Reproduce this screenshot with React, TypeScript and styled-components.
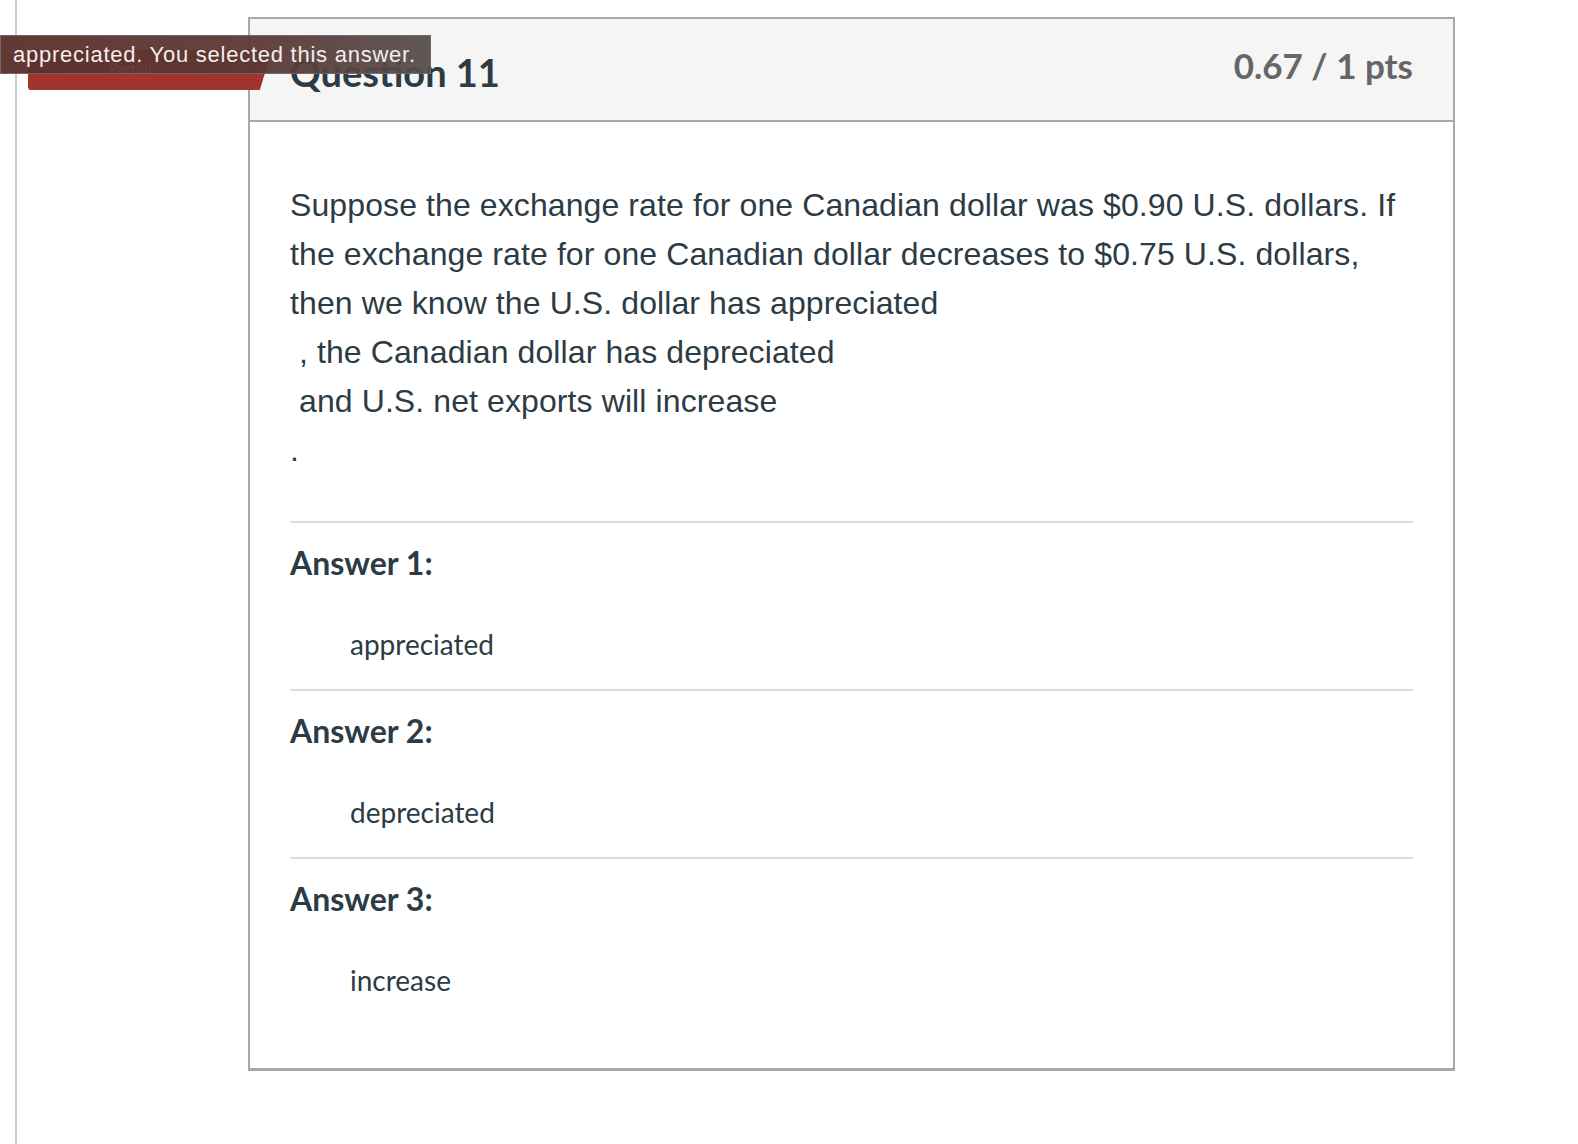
import styled, { createGlobalStyle } from "styled-components";

const GlobalStyle = createGlobalStyle`
   html, body {
      margin: 0;
      padding: 0;
      background: #fff;
   }
   body {
      font-family: Lato, "Liberation Sans", sans-serif;
      color: #2d3b45;
   }
`;

interface Answer {
   label: string;
   value: string;
}

const answers: Answer[] = [
   { label: "Answer 1:", value: "appreciated" },
   { label: "Answer 2:", value: "depreciated" },
   { label: "Answer 3:", value: "increase" },
];

const App = () => {
   return (
      <>
         <GlobalStyle />
         <Page>
            <Flag>Partial</Flag>
            <Tooltip>appreciated. You selected this answer.</Tooltip>
            <Card>
               <Header>
                  <Title>Question 11</Title>
                  <Points>0.67 / 1 pts</Points>
               </Header>
               <Body>
                  <QuestionText>
                     Suppose the exchange rate for one Canadian dollar was $0.90 U.S. dollars. If
                     <br />
                     the exchange rate for one Canadian dollar decreases to $0.75 U.S. dollars,
                     <br />
                     then we know the U.S. dollar has appreciated
                     <Blank>&nbsp;, the Canadian dollar has depreciated</Blank>
                     <Blank>&nbsp;and U.S. net exports will increase</Blank>
                     <Blank>.</Blank>
                  </QuestionText>
                  {answers.map((a) => (
                     <AnswerSection key={a.label}>
                        <AnswerLabel>{a.label}</AnswerLabel>
                        <AnswerValue>{a.value}</AnswerValue>
                     </AnswerSection>
                  ))}
               </Body>
            </Card>
         </Page>
      </>
   );
};

export default App;

const Page = styled.div`
   position: relative;
   min-height: 1144px;
   margin-left: 15px;
   border-left: 2px solid #c7cdd1;
   padding: 17px 0 0 231px;
   box-sizing: border-box;
`;

const Flag = styled.div`
   position: absolute;
   left: 11px;
   top: 50px;
   width: 244px;
   height: 40px;
   background: #a3342b;
   color: #fff;
   font-size: 15px;
   font-weight: 700;
   line-height: 37px;
   text-align: center;
   border-radius: 3px 0 0 3px;
   clip-path: polygon(0 0, 100% 0, 95% 100%, 0 100%);
   text-indent: -40px;
`;

const Tooltip = styled.div`
   position: absolute;
   z-index: 2;
   left: -17px;
   top: 35px;
   height: 39px;
   padding: 0 14px 0 12px;
   box-sizing: border-box;
   display: flex;
   align-items: center;
   background: linear-gradient(90deg, rgba(92, 48, 44, 0.96), rgba(90, 56, 52, 0.94) 60%, rgba(86, 78, 76, 0.94));
   border: 1px solid rgba(120, 120, 120, 0.7);
   color: #f3eeee;
   font-family: "Liberation Sans", Arial, sans-serif;
   font-size: 22px;
   letter-spacing: 0.75px;
   white-space: nowrap;
`;

const Card = styled.div`
   width: 1207px;
   border: 2px solid #a8a8a8;
   border-bottom-width: 3px;
   box-sizing: border-box;
`;

const Header = styled.div`
   display: flex;
   justify-content: space-between;
   align-items: flex-start;
   height: 103px;
   padding: 0 40px;
   background: #f5f5f5;
   border-bottom: 2px solid #a8a8a8;
   box-sizing: border-box;
`;

const Title = styled.h2`
   margin: 0;
   padding-top: 30px;
   font-size: 38px;
   font-weight: 700;
   color: #2d3b45;
`;

const Points = styled.div`
   padding-top: 25px;
   font-size: 35px;
   font-weight: 700;
   color: #666;
`;

const Body = styled.div`
   padding: 59px 40px 43px 40px;
`;

const QuestionText = styled.div`
   font-family: "Liberation Sans", Arial, sans-serif;
   font-size: 32px;
   letter-spacing: 0.1px;
   line-height: 49px;
   color: #2d3b45;
   padding-bottom: 46px;
   white-space: nowrap;
`;

const Blank = styled.span`
   display: block;
`;

const AnswerSection = styled.div`
   border-top: 2px solid #dcdcdc;
   padding: 19px 0 25px;
`;

const AnswerLabel = styled.div`
   font-size: 32px;
   font-weight: 700;
   line-height: 42px;
   color: #2d3b45;
`;

const AnswerValue = styled.div`
   margin-top: 41px;
   padding-left: 60px;
   font-size: 28px;
   line-height: 39px;
   color: #2d3b45;
`;
